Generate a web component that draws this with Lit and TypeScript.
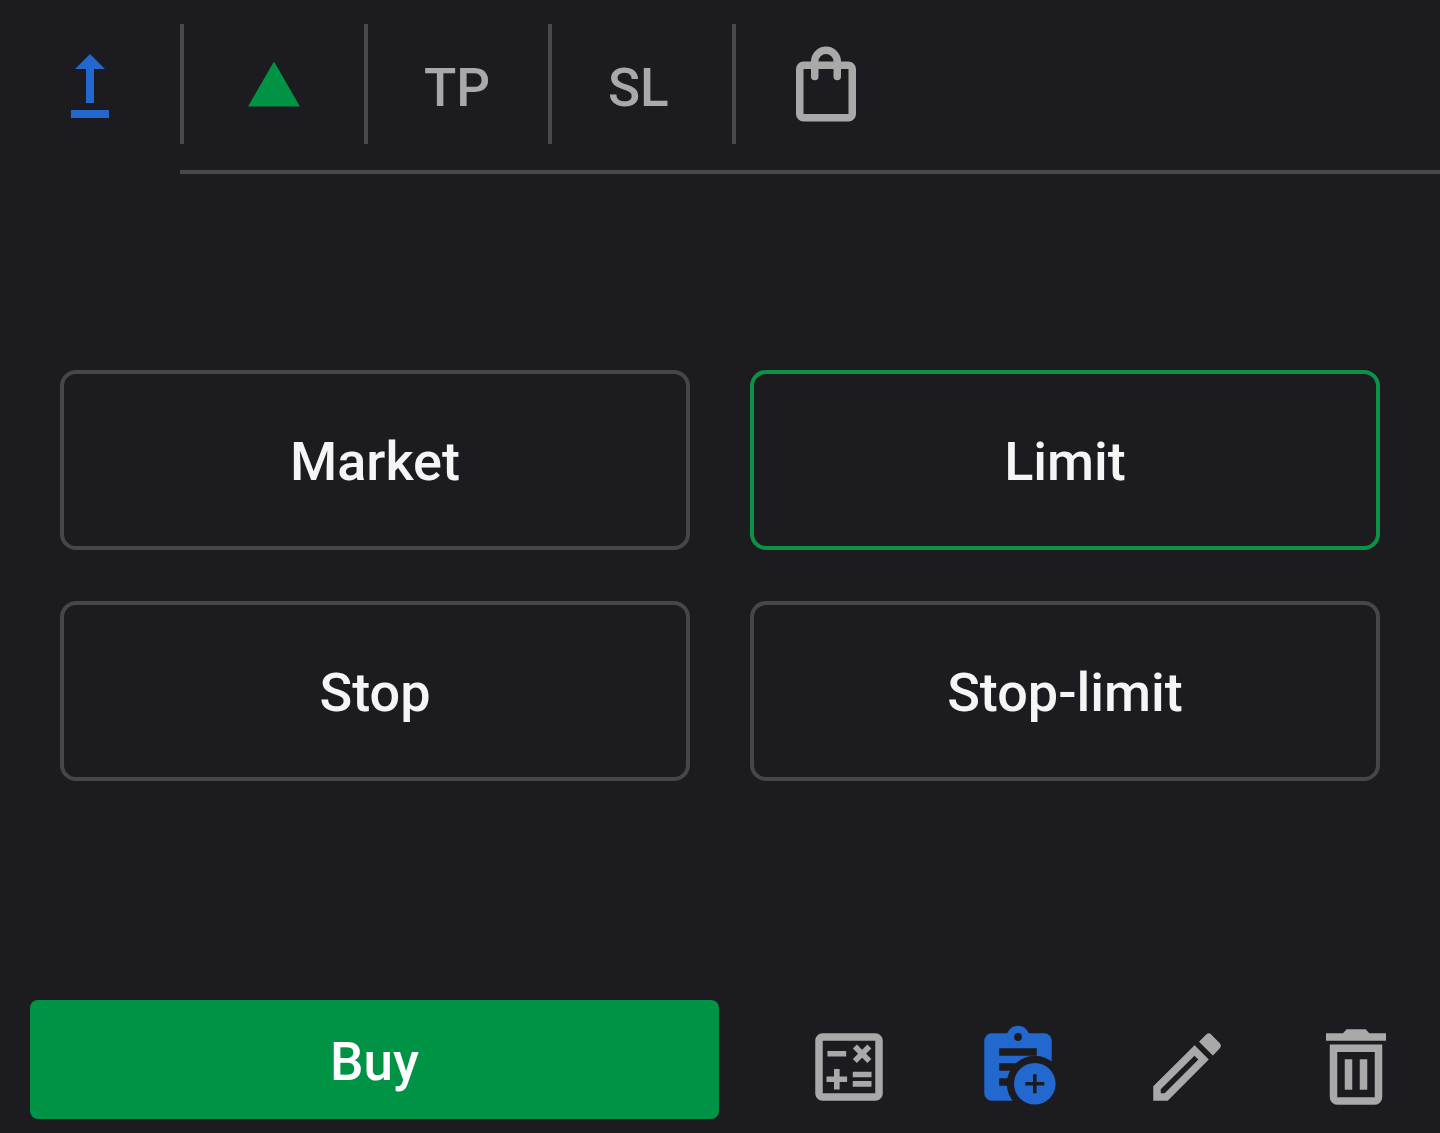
import { LitElement, html, css, svg } from "lit";
import { customElement, property, state } from "lit/decorators.js";
import { classMap } from "lit/directives/class-map.js";

const icons = {
  upload: svg`
    <path d="M45 15 60 30H49V64H41V30H30Z" />
    <rect x="26" y="71" width="38" height="8" />`,
  triangle: svg`<path d="M45 22.5 71 67.5H19Z" />`,
  bag: svg`
    <path fill-rule="evenodd" d="M22.5 22.5h45a7.5 7.5 0 0 1 7.5 7.5v45a7.5 7.5 0 0 1-7.5 7.5h-45A7.5 7.5 0 0 1 15 75V30a7.5 7.5 0 0 1 7.5-7.5ZM22.5 30v45h45V30Z" />
    <path d="M33.75 37.5V22.5a11.25 11.25 0 0 1 22.5 0V37.5" fill="none" stroke="currentColor" stroke-width="7.5" stroke-linecap="round" />`,
  calculator: svg`
    <g transform="scale(3.75)">
      <path d="M19 3H5c-1.1 0-2 .9-2 2v14c0 1.1.9 2 2 2h14c1.1 0 2-.9 2-2V5c0-1.1-.9-2-2-2zm0 16H5V5h14v14z" />
      <path d="M6.25 7.72h5v1.5h-5zM13 15.75h5v1.5h-5zM13 13.25h5v1.5h-5zM8 18h1.5v-2h2v-1.5h-2v-2H8v2H6V16h2zM14.09 10.95l1.41-1.41 1.41 1.41 1.06-1.06-1.41-1.42 1.41-1.41L16.91 6l-1.41 1.41L14.09 6l-1.06 1.06 1.41 1.41-1.41 1.42z" />
    </g>`,
  clipboard: svg`
    <rect x="11.25" y="11.25" width="67.5" height="67.5" rx="7.5" />
    <circle cx="45" cy="15" r="11.2" />
    <g class="cut">
      <circle cx="45" cy="15" r="3.9" />
      <path d="M26.2 26.2H63.8V33.8H26.2ZM26.2 41.3H50V48.8H26.2ZM26.2 56.3H40V63.8H26.2Z" />
      <circle cx="61.8" cy="61.8" r="28" />
    </g>
    <circle cx="61.8" cy="61.8" r="20.8" />
    <path class="cut" d="M60 52.3h3.6v7.7h7.7v3.6h-7.7v7.7H60v-7.7h-7.7V60H60Z" />`,
  pencil: svg`
    <path fill-rule="evenodd" d="M11.25 64.2 52.6 23.3 66.8 37.6 25.7 78.75H11.25ZM18.75 67.3V71.25H22.7L56.4 37.6 52.4 33.7Z" />
    <path d="M57 19.7 63.7 13Q66.3 10 69.2 12.5L77.6 20.9Q80.2 23.5 77.6 26.4L70.9 33.4Z" />`,
  trash: svg`
    <path d="M15 11.25H32L35.6 7.3H54.6L58.3 11.25H75V18.75H15Z" />
    <path fill-rule="evenodd" d="M18.75 22.5H71.25V75.3a7.5 7.5 0 0 1-7.5 7.5H26.25a7.5 7.5 0 0 1-7.5-7.5ZM26.25 30V75.3H63.75V30Z" />
    <path d="M33.75 37.2H41.25V67.8H33.75ZM48.75 37.2H56.25V67.8H48.75Z" />`,
};

type IconName = keyof typeof icons;

@customElement("ui-icon")
export class UiIcon extends LitElement {
  @property() name: IconName = "bag";

  static styles = css`
    :host {
      display: block;
      width: 90px;
      height: 90px;
    }
    .glyph {
      display: block;
      width: 100%;
      height: 100%;
      fill: currentColor;
    }
    .cut {
      fill: #1c1b1f;
    }
  `;

  render() {
    return html`<svg class="glyph" viewBox="0 0 90 90" aria-hidden="true">${icons[this.name]}</svg>`;
  }
}

@customElement("app-root")
export class AppRoot extends LitElement {
  @state() private orderType = "Limit";

  private orderTypes = ["Market", "Limit", "Stop", "Stop-limit"];

  static styles = css`
    :host {
      display: block;
      font-family: Roboto, "Liberation Sans", sans-serif;
      font-weight: 500;
      font-size: 53px;
      line-height: 64px;
    }
    .page {
      box-sizing: border-box;
      min-height: 100vh;
      display: flex;
      flex-direction: column;
      background: #1c1b1f;
      color: #f5f5f6;
    }
    button {
      box-sizing: border-box;
      margin: 0;
      padding: 0;
      border: 0;
      background: none;
      color: inherit;
      font: inherit;
      cursor: pointer;
      display: flex;
      align-items: center;
      justify-content: center;
    }
    .toolbar {
      display: flex;
      padding-top: 24px;
    }
    .pin {
      width: 180px;
      height: 120px;
      color: #2268cf;
    }
    .tabs {
      flex: 1;
      display: flex;
      padding-bottom: 26px;
      border-bottom: 4px solid #48494d;
    }
    .tab {
      width: 184px;
      height: 120px;
      border-left: 4px solid #48494d;
      color: #a9a9a9;
    }
    .label {
      justify-content: flex-start;
      padding: 8px 0 0 56px;
    }
    .buy-side {
      color: #009345;
    }
    .types {
      display: grid;
      grid-template-columns: 1fr 1fr;
      gap: 51px 60px;
      padding: 196px 60px 60px;
    }
    .type {
      height: 180px;
      border: 4px solid #45464a;
      border-radius: 16px;
      font-size: 54px;
      padding-top: 4px;
    }
    .selected {
      border-color: #0b9247;
    }
    .footer {
      margin-top: auto;
      display: grid;
      grid-template-columns: 689fr 676fr;
      column-gap: 45px;
      padding: 0 0 14px 30px;
    }
    .submit {
      height: 119px;
      border-radius: 8px;
      background: #009345;
      color: #ffffff;
      padding-top: 4px;
    }
    .actions {
      display: grid;
      grid-template-columns: repeat(4, 1fr);
      align-items: start;
      padding-top: 22px;
    }
    .action {
      color: #a9a9a9;
    }
    .active {
      color: #2268cf;
    }
  `;

  render() {
    return html`
      <main class="page">
        <header class="toolbar">
          <button class="pin" aria-label="Order type"><ui-icon name="upload"></ui-icon></button>
          <nav class="tabs">
            <button class="tab buy-side" aria-label="Side"><ui-icon name="triangle"></ui-icon></button>
            <button class="tab label">TP</button>
            <button class="tab label">SL</button>
            <button class="tab" aria-label="Quantity"><ui-icon name="bag"></ui-icon></button>
          </nav>
        </header>
        <section class="types">
          ${this.orderTypes.map(
            (type) => html`<button
              class=${classMap({ type: true, selected: type === this.orderType })}
              aria-pressed=${type === this.orderType ? "true" : "false"}
              @click=${() => (this.orderType = type)}
            >${type}</button>`
          )}
        </section>
        <footer class="footer">
          <button class="submit">Buy</button>
          <div class="actions">
            <button class="action" aria-label="Calculator"><ui-icon name="calculator"></ui-icon></button>
            <button class="action active" aria-label="Add order"><ui-icon name="clipboard"></ui-icon></button>
            <button class="action" aria-label="Edit"><ui-icon name="pencil"></ui-icon></button>
            <button class="action" aria-label="Delete"><ui-icon name="trash"></ui-icon></button>
          </div>
        </footer>
      </main>
    `;
  }
}
